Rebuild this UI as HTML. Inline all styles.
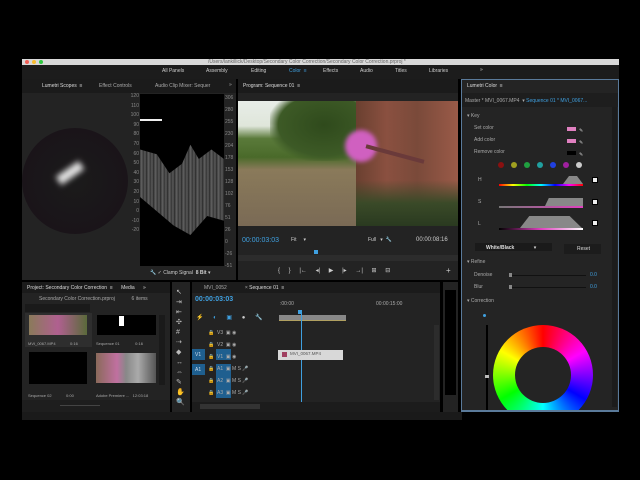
<!DOCTYPE html>
<html><head><style>
*{margin:0;padding:0;box-sizing:border-box}
body{width:640px;height:480px;background:#000;position:relative;overflow:hidden;font-family:"Liberation Sans",sans-serif;color:#aaa;font-size:5px}
div,span{position:absolute}
.p{background:#232323}
.h{background:#1b1b1b}
.t{white-space:nowrap}
.b{color:#3fa0e0}
.blk{background:#000}
</style></head><body>
<!-- title bar -->
<div style="left:22px;top:59px;width:597px;height:6px;background:#d8d8d8"></div>
<div style="left:25px;top:60px;width:4px;height:4px;border-radius:50%;background:#f25f57"></div>
<div style="left:32px;top:60px;width:4px;height:4px;border-radius:50%;background:#f8bc2e"></div>
<div style="left:39px;top:60px;width:4px;height:4px;border-radius:50%;background:#2fc840"></div>
<div class="t" style="left:208px;top:59px;font-size:5px;color:#666">/Users/lankillick/Desktop/Secondary Color Correction/Secondary Color Correction.prproj *</div>
<!-- workspace bar -->
<div style="left:22px;top:65px;width:597px;height:14px;background:#1c1c1c"></div>
<div class="t" style="left:162px;top:68px;color:#ccc">All Panels</div>
<div class="t" style="left:206px;top:68px;color:#ccc">Assembly</div>
<div class="t" style="left:251px;top:68px;color:#ccc">Editing</div>
<div class="t" style="left:289px;top:68px;color:#3fa0e0">Color &nbsp;≡</div>
<div class="t" style="left:323px;top:68px;color:#ccc">Effects</div>
<div class="t" style="left:360px;top:68px;color:#ccc">Audio</div>
<div class="t" style="left:395px;top:68px;color:#ccc">Titles</div>
<div class="t" style="left:429px;top:68px;color:#ccc">Libraries</div>
<div class="t" style="left:480px;top:67px;color:#ccc">»</div>
<!-- scopes panel -->
<div class="p" style="left:22px;top:79px;width:214px;height:201px"></div>
<div class="h" style="left:22px;top:79px;width:214px;height:14px"></div>
<div class="t" style="left:42px;top:83px;color:#ddd">Lumetri Scopes &nbsp;≡</div>
<div class="t" style="left:99px;top:83px">Effect Controls</div>
<div class="t" style="left:155px;top:83px">Audio Clip Mixer: Sequer</div>
<div class="t" style="left:229px;top:82px">»</div>
<div style="left:22px;top:128px;width:106px;height:106px;border-radius:50%;background:radial-gradient(circle,#1b1b1b,#1a1419 70%,#140f18)"></div>
<div style="left:56px;top:168px;width:28px;height:10px;background:#ddd;filter:blur(3px);transform:rotate(-35deg)"></div>
<div class="blk" style="left:140px;top:94px;width:84px;height:172px"></div>
<div style="left:140px;top:140px;width:84px;height:95px;background:repeating-linear-gradient(90deg,#555 0,#888 2px,#444 3px,#777 5px,#333 7px);opacity:.75;clip-path:polygon(0 10%,20% 15%,35% 35%,50% 25%,60% 5%,70% 20%,85% 10%,100% 20%,100% 85%,80% 80%,60% 100%,40% 90%,20% 75%,0 60%)"></div>
<div style="left:140px;top:119px;width:22px;height:2px;background:#eee"></div>
<div class="t" style="left:128px;top:92px;line-height:9.6px;color:#888;text-align:right;width:11px;font-size:5px">120<br>110<br>100<br>90<br>80<br>70<br>60<br>50<br>40<br>30<br>20<br>10<br>0<br>-10<br>-20</div>
<div class="t" style="left:225px;top:92px;line-height:12px;color:#888;font-size:5px">306<br>280<br>255<br>230<br>204<br>178<br>153<br>128<br>102<br>76<br>51<br>26<br>0<br>-26<br>-51</div>
<div class="t" style="left:150px;top:270px;color:#ccc">🔧 ✓ Clamp Signal &nbsp;<b>8 Bit</b> ▾</div>
<!-- program monitor -->
<div class="p" style="left:238px;top:79px;width:220px;height:201px"></div>
<div class="h" style="left:238px;top:79px;width:220px;height:14px"></div>
<div class="t" style="left:243px;top:83px;color:#ddd">Program: Sequence 01 &nbsp;≡</div>
<div style="left:238px;top:101px;width:220px;height:125px;background:linear-gradient(180deg,#e8ede8 0,#dfe6da 20%,#5a7a3a 30%,#4a6a2a 45%,#8a7a5a 55%,#7a6a55 100%)"></div>
<div style="left:270px;top:101px;width:90px;height:60px;background:radial-gradient(ellipse at 60% 40%,#2f4a1c,#3d5a26 60%,transparent 75%)"></div>
<div style="left:356px;top:101px;width:102px;height:125px;background:linear-gradient(90deg,#6a4030,#8a5040 30%,#7a4a3a 60%,#9a5a48)"></div>
<div style="left:356px;top:180px;width:102px;height:46px;background:linear-gradient(180deg,transparent,#3a4a28 50%,#2a3a20)"></div>
<div style="left:345px;top:130px;width:32px;height:32px;border-radius:50%;background:#d060c0;filter:blur(2px)"></div>
<div style="left:365px;top:152px;width:60px;height:4px;background:#6a3a3a;transform:rotate(15deg)"></div>
<div class="t b" style="left:242px;top:237px;font-size:7px">00:00:03:03</div>
<div class="t" style="left:291px;top:237px;color:#ccc">Fit &nbsp;&nbsp;&nbsp;&nbsp;▾</div>
<div class="t" style="left:368px;top:237px;color:#ccc">Full &nbsp;&nbsp;▾ &nbsp;🔧</div>
<div class="t" style="left:416px;top:237px;color:#ccc;font-size:6px">00:00:08:16</div>
<div style="left:238px;top:255px;width:220px;height:6px;background:#2c2c2c"></div>
<div style="left:314px;top:250px;width:4px;height:4px;background:#3fa0e0"></div>
<div class="t" style="left:278px;top:267px;color:#ccc;font-size:6px;word-spacing:7px">{ } |← ◂| ▶ |▸ →| ⊞ ⊟</div>
<div class="t" style="left:446px;top:266px;color:#ccc;font-size:8px">+</div>
<!-- lumetri color -->
<div style="left:461px;top:79px;width:158px;height:333px;background:#242424;border:1px solid #5a7a9a"></div>
<div class="t" style="left:467px;top:83px;color:#ddd">Lumetri Color &nbsp;≡</div>
<div style="left:462px;top:93px;width:156px;height:14px;background:#1e1e1e"></div>
<div class="t" style="left:465px;top:98px">Master * MVI_0067.MP4 &nbsp;▾ <span class="b" style="position:static">Sequence 01 * MVI_0067...</span></div>
<div style="left:612px;top:107px;width:5px;height:300px;background:#1c1c1c"></div>
<div class="t" style="left:467px;top:113px">▾ Key</div>
<div class="t" style="left:474px;top:125px">Set color</div>
<div class="t" style="left:474px;top:137px">Add color</div>
<div class="t" style="left:474px;top:149px">Remove color</div>
<div style="left:567px;top:127px;width:9px;height:4px;background:#e080c0"></div>
<div style="left:567px;top:139px;width:9px;height:4px;background:#e080c0"></div>
<div style="left:567px;top:151px;width:9px;height:4px;background:#000"></div>
<div class="t" style="left:579px;top:125px;color:#ccc;line-height:12px">✎<br>✎<br>✎</div>
<div style="left:498px;top:162px;width:6px;height:6px;border-radius:50%;background:#8a1010"></div>
<div style="left:511px;top:162px;width:6px;height:6px;border-radius:50%;background:#a0a020"></div>
<div style="left:524px;top:162px;width:6px;height:6px;border-radius:50%;background:#20a040"></div>
<div style="left:537px;top:162px;width:6px;height:6px;border-radius:50%;background:#20a0a0"></div>
<div style="left:550px;top:162px;width:6px;height:6px;border-radius:50%;background:#2040e0"></div>
<div style="left:563px;top:162px;width:6px;height:6px;border-radius:50%;background:#a020a0"></div>
<div style="left:576px;top:162px;width:6px;height:6px;border-radius:50%;background:#ccc"></div>
<div class="t" style="left:478px;top:177px">H</div><div class="t" style="left:478px;top:199px">S</div><div class="t" style="left:478px;top:221px">L</div>
<div style="left:499px;top:184px;width:84px;height:2px;background:linear-gradient(90deg,red,yellow,lime,cyan,blue,magenta,red)"></div>
<div style="left:563px;top:176px;width:20px;height:8px;background:#888;clip-path:polygon(30% 0,70% 0,100% 100%,0 100%)"></div>
<div style="left:499px;top:206px;width:84px;height:2px;background:linear-gradient(90deg,#777,#e040c0)"></div>
<div style="left:545px;top:198px;width:38px;height:8px;background:#888;clip-path:polygon(10% 0,100% 0,100% 100%,0 100%)"></div>
<div style="left:499px;top:228px;width:84px;height:2px;background:linear-gradient(90deg,#000,#e040c0,#fff)"></div>
<div style="left:520px;top:216px;width:62px;height:12px;background:#888;clip-path:polygon(15% 0,80% 0,100% 100%,0 100%)"></div>
<div style="left:592px;top:177px;width:6px;height:6px;background:#eee;border:1px solid #000"></div>
<div style="left:592px;top:199px;width:6px;height:6px;background:#eee;border:1px solid #000"></div>
<div style="left:592px;top:220px;width:6px;height:6px;background:#eee;border:1px solid #000"></div>
<div style="left:475px;top:243px;width:77px;height:8px;background:#1a1a1a"></div>
<div class="t" style="left:486px;top:245px;color:#ddd"><b>White/Black</b> &nbsp;&nbsp;&nbsp;&nbsp;&nbsp;&nbsp;&nbsp;&nbsp;&nbsp;&nbsp;&nbsp;&nbsp;&nbsp;▾</div>
<div style="left:564px;top:244px;width:37px;height:10px;background:#1c1c1c"></div>
<div class="t" style="left:577px;top:246px;color:#ddd">Reset</div>
<div class="t" style="left:467px;top:259px">▾ Refine</div>
<div class="t" style="left:474px;top:272px">Denoise</div><div class="t" style="left:474px;top:284px">Blur</div>
<div style="left:510px;top:275px;width:76px;height:1px;background:#111"></div>
<div style="left:510px;top:287px;width:76px;height:1px;background:#111"></div>
<div style="left:509px;top:273px;width:3px;height:4px;background:#888"></div>
<div style="left:509px;top:285px;width:3px;height:4px;background:#888"></div>
<div class="t b" style="left:590px;top:272px">0.0</div><div class="t b" style="left:590px;top:284px">0.0</div>
<div class="t" style="left:467px;top:298px">▾ Correction</div>
<div style="left:483px;top:314px;width:3px;height:3px;border-radius:50%;background:#3fa0e0"></div>
<div style="left:486px;top:325px;width:2px;height:86px;background:#000"></div>
<div style="left:485px;top:375px;width:4px;height:3px;background:#bbb"></div>
<div style="left:462px;top:320px;width:150px;height:90px;overflow:hidden">
<div style="left:31px;top:5px;width:100px;height:100px;border-radius:50%;background:conic-gradient(red,magenta,blue,cyan,lime,yellow,red)"></div>
<div style="left:53px;top:27px;width:56px;height:56px;border-radius:50%;background:#242424"></div>
</div>
<div style="left:461px;top:410px;width:158px;height:1px;background:#5a7a9a"></div>
<!-- project panel -->
<div class="p" style="left:22px;top:282px;width:148px;height:130px"></div>
<div class="h" style="left:22px;top:282px;width:148px;height:11px"></div>
<div class="t" style="left:27px;top:285px;color:#ddd">Project: Secondary Color Correction &nbsp;≡ &nbsp;&nbsp;&nbsp;&nbsp;&nbsp;Media &nbsp;&nbsp;&nbsp;&nbsp;&nbsp;»</div>
<div class="t" style="left:39px;top:296px">Secondary Color Correction.prproj &nbsp;&nbsp;&nbsp;&nbsp;&nbsp;&nbsp;&nbsp;&nbsp;&nbsp;&nbsp;&nbsp;6 items</div>
<div style="left:25px;top:304px;width:65px;height:8px;background:#1a1a1a"></div>
<div style="left:25px;top:313px;width:67px;height:34px;background:#2e2e2e"></div>
<div style="left:29px;top:315px;width:58px;height:20px;background:linear-gradient(90deg,#8a7a5a,#b06090,#5a6a3a)"></div>
<div style="left:97px;top:315px;width:59px;height:20px;background:#000"></div>
<div style="left:119px;top:316px;width:5px;height:10px;background:#fff"></div>
<div class="t" style="left:28px;top:341px;font-size:4px">MVI_0067.MP4 &nbsp;&nbsp;&nbsp;&nbsp;&nbsp;&nbsp;&nbsp;&nbsp;&nbsp;&nbsp;&nbsp;&nbsp;0:16</div>
<div class="t" style="left:96px;top:341px;font-size:4px">Sequence 01 &nbsp;&nbsp;&nbsp;&nbsp;&nbsp;&nbsp;&nbsp;&nbsp;&nbsp;&nbsp;&nbsp;&nbsp;&nbsp;0:16</div>
<div style="left:29px;top:352px;width:58px;height:32px;background:#000"></div>
<div style="left:96px;top:353px;width:60px;height:30px;background:linear-gradient(90deg,#8a6a5a,#c070a0 35%,#888 50%,#aaa 70%,#555)"></div>
<div class="t" style="left:28px;top:393px;font-size:4px">Sequence 02 &nbsp;&nbsp;&nbsp;&nbsp;&nbsp;&nbsp;&nbsp;&nbsp;&nbsp;&nbsp;&nbsp;&nbsp;0:00</div>
<div class="t" style="left:96px;top:393px;font-size:4px">Adobe Premiere ... &nbsp;&nbsp;12:03:18</div>
<div style="left:159px;top:315px;width:6px;height:70px;background:#1a1a1a"></div>
<div style="left:22px;top:400px;width:148px;height:12px;background:#1e1e1e"></div>
<div style="left:60px;top:405px;width:40px;height:1px;background:#444"></div>
<!-- tools -->
<div class="p" style="left:172px;top:282px;width:18px;height:130px"></div>
<div class="t" style="left:176px;top:288px;color:#bbb;line-height:10px;font-size:7px">↖<br>⇥<br>⇤<br>✣<br>#<br>⇢<br>◆<br>↔<br>⇔<br>✎<br>✋<br>🔍</div>
<!-- timeline -->
<div class="p" style="left:192px;top:282px;width:248px;height:130px"></div>
<div class="h" style="left:192px;top:282px;width:248px;height:11px"></div>
<div class="t" style="left:204px;top:285px">MVI_0052 &nbsp;&nbsp;&nbsp;&nbsp;&nbsp;&nbsp;&nbsp;&nbsp;&nbsp;&nbsp;&nbsp;&nbsp;× <span style="position:static;color:#ddd">Sequence 01 &nbsp;≡</span></div>
<div class="t b" style="left:195px;top:296px;font-size:7px;font-weight:bold">00:00:03:03</div>
<div class="t" style="left:280px;top:301px">:00:00</div>
<div class="t" style="left:376px;top:301px">00:00:15:00</div>
<div class="t b" style="left:196px;top:314px;font-size:6px;word-spacing:8px">⚡ ◐ ▣ <span style="position:static;color:#ccc">● 🔧</span></div>
<div style="left:279px;top:315px;width:67px;height:6px;background:#888;border-bottom:1px solid #b0a060"></div>
<div style="left:298px;top:310px;width:4px;height:4px;background:#3fa0e0"></div>
<div style="left:301px;top:310px;width:1px;height:92px;background:#3fa0e0"></div>
<div style="left:192px;top:349px;width:13px;height:11px;background:#1f5f8f"></div>
<div style="left:216px;top:349px;width:15px;height:11px;background:#1f5f8f"></div>
<div style="left:192px;top:364px;width:13px;height:11px;background:#1f5f8f"></div>
<div style="left:216px;top:364px;width:15px;height:34px;background:#1f5f8f"></div>
<div class="t" style="left:195px;top:352px;color:#cde">V1</div>
<div class="t" style="left:195px;top:367px;color:#cde">A1</div>
<div class="t" style="left:208px;top:327px;color:#aaa;line-height:12px">🔒 &nbsp;V3 &nbsp;▣ ◉<br>🔒 &nbsp;V2 &nbsp;▣ ◉<br>🔒 &nbsp;V1 &nbsp;▣ ◉<br>🔒 &nbsp;A1 &nbsp;▣ M S 🎤<br>🔒 &nbsp;A2 &nbsp;▣ M S 🎤<br>🔒 &nbsp;A3 &nbsp;▣ M S 🎤</div>
<div style="left:278px;top:350px;width:65px;height:10px;background:#d8d8d8"></div>
<div style="left:282px;top:352px;width:5px;height:5px;background:#a04060"></div>
<div class="t" style="left:290px;top:351px;color:#555;font-size:4.5px">MVI_0067.MP4</div>
<div style="left:434px;top:325px;width:5px;height:75px;background:#2c2c2c"></div>
<div style="left:192px;top:402px;width:248px;height:10px;background:#1c1c1c"></div>
<div style="left:200px;top:404px;width:60px;height:5px;background:#333"></div>
<!-- meters -->
<div class="p" style="left:443px;top:282px;width:15px;height:130px"></div>
<div class="blk" style="left:445px;top:290px;width:11px;height:105px"></div>
<div style="left:22px;top:412px;width:440px;height:8px;background:#1a1a1a"></div>
</body></html>
